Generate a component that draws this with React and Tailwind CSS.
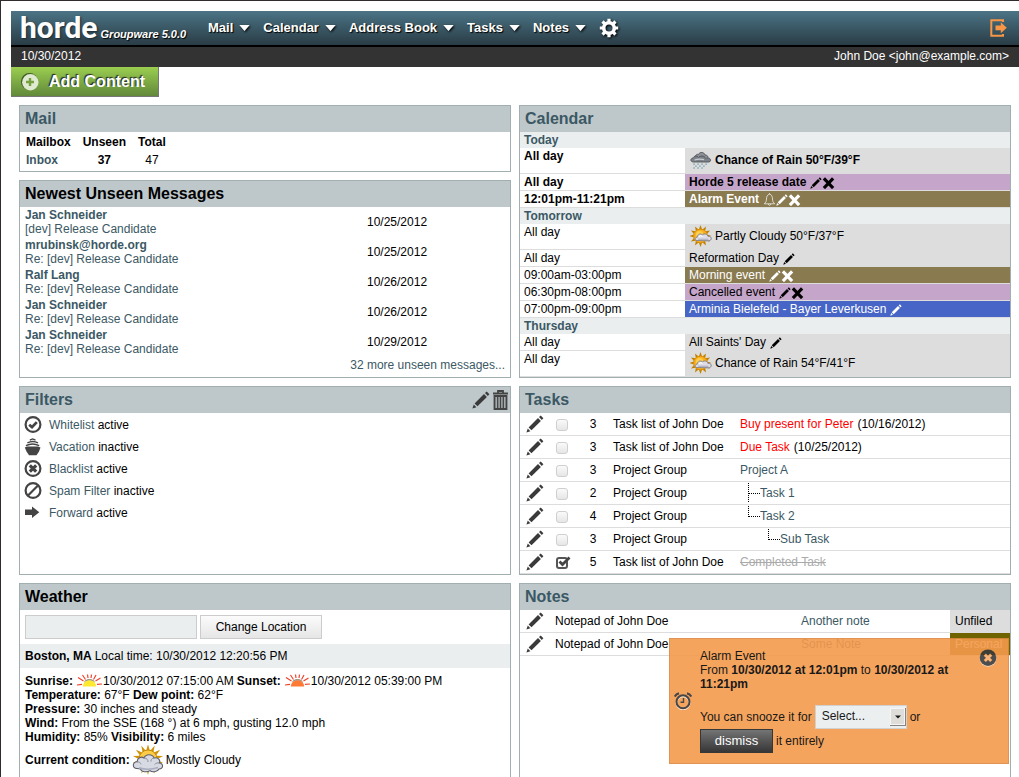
import React from "react";

const LINK = "text-[#3b5864] hover:underline";

function Pencil({ className = "size-[18px] text-[#3a3a3a]" }) {
  return (
    <svg viewBox="0 0 18 18" className={"shrink-0 " + className} fill="currentColor" aria-hidden="true">
      <path d="M0.4 17.6 1.8 13.6 4.4 16.2Z" />
      <path d="M2.6 12.4 12 3 14.9 5.9 5.5 15.3Z" />
      <path d="M13 2.1 14.7 0.5 17.4 3.2 15.8 4.9Z" />
    </svg>
  );
}

function Cross() {
  return (
    <svg viewBox="0 0 13 13" className="h-3 w-[13px] shrink-0" stroke="currentColor" strokeWidth="3.4" fill="none" aria-hidden="true">
      <path d="M1.5 1.5 11.5 12M11.5 1.5 1.5 12" />
    </svg>
  );
}

function Bell() {
  return (
    <svg viewBox="0 0 13 13" className="h-[13px] w-[13px] shrink-0" stroke="currentColor" strokeWidth="0.7" fill="none" aria-hidden="true">
      <path d="M6.5 1.2C4.2 1.6 3.6 3.6 3.5 6 3.4 8.5 2.8 9.4 1.3 10.8H11.7C10.2 9.4 9.6 8.5 9.5 6 9.4 3.6 8.8 1.6 6.5 1.2ZM5 11.2 6.5 12.4 8 11.2M6.5 0.2V1.2" />
    </svg>
  );
}

function Rays({ color, cx, cy, inner, outer, count, width }) {
  const rays = [];
  for (let i = 0; i < count; i++) {
    const a = (i * 2 * Math.PI) / count - Math.PI / 2;
    rays.push(
      "M" + (cx + inner * Math.cos(a - width)) + " " + (cy + inner * Math.sin(a - width)) +
      "L" + (cx + outer * Math.cos(a)) + " " + (cy + outer * Math.sin(a)) +
      "L" + (cx + inner * Math.cos(a + width)) + " " + (cy + inner * Math.sin(a + width)) + "Z"
    );
  }
  return <path d={rays.join("")} fill={color} />;
}

function PartlyCloudy() {
  return (
    <svg viewBox="0 0 22 22" className="size-[22px] shrink-0" aria-hidden="true">
      <Rays color="#c08200" cx={10.5} cy={11} inner={6.8} outer={11} count={12} width={0.24} />
      <circle cx="10.5" cy="11" r="6.8" fill="#f9b320" stroke="#e08c06" strokeWidth="1" />
      <circle cx="9.5" cy="9.5" r="3.5" fill="#ffd050" />
      <path d="M7 15.6C4.4 15.4 4.6 12.2 7.2 12.2 7.5 9.2 10.6 8.2 12.4 9.8 14.4 8.2 17.4 9 17.8 11.2 22 11 22.4 15.4 18.8 15.8Z" fill="#dcdce6" stroke="#82828f" strokeWidth="1" />
      <path d="M8.2 14.3H18.4" stroke="#b0b0c0" strokeWidth="1.2" />
      <path d="M9 12Q10.500 9.800 12.500 11.500" stroke="#fff" strokeWidth="1.2" fill="none" />
    </svg>
  );
}

function MostlyCloudy() {
  return (
    <svg viewBox="0 0 32 30" className="h-[30px] w-8 shrink-0" aria-hidden="true">
      <Rays color="#cf9408" cx={16} cy={14.5} inner={9} outer={15.5} count={14} width={0.2} />
      <circle cx="16" cy="14" r="9" fill="#fdcb45" stroke="#c98a0c" />
      <path d="M5 23.5C-0.4 23.4 0.6 16.2 5.2 16.8 5 13 9.4 11 12 13 13.6 8.8 20.4 8.6 22 13 26.4 12 28.6 15.4 27.4 18 31.8 18.2 31.6 24 27 24 25.6 27.2 19.6 27.4 18 25.6 15 27.6 9 27 8.6 24Z" fill="#d8dae3" stroke="#5c5f6a" strokeWidth="1.1" />
      <path d="M12 13C15 13 16 15 16 17M22 13C19.6 13.4 18.8 15 19 16.6M5.2 16.8C7.4 16.6 8.6 18 9 19.4M27.4 18C25.6 17.6 23.6 18.2 22.6 19.6" fill="none" stroke="#8a8e9b" />
      <path d="M7 22.8C12 24.5 20 24.6 26 22.6" stroke="#a9adbf" strokeWidth="1.6" fill="none" />
    </svg>
  );
}

function RainCloud() {
  return (
    <svg viewBox="0 0 22 18" className="h-[18px] w-[22px] shrink-0" aria-hidden="true">
      <path d="M5 6.5C5.400 3 8 3.200 8.600 3.400 9.600 0.600 14.200 0.800 15 4 17.400 4 18 5.400 17.800 6.500" fill="#8d9197" stroke="#595d63" />
      <path d="M3.5 11C0 11 0.2 7.2 3 7.2 3.6 4.6 7.4 4.6 8.6 6.400 10.400 4.400 14.800 4.800 15.600 7.200 20 5.400 22.400 10 19 11Z" fill="#7d828a" stroke="#4c5056" strokeWidth="0.9" />
      <path d="M4.500 9C8 7.800 11 8 14 8.600" stroke="#c9ccd1" strokeWidth="1.300" fill="none" />
      <path d="M4.300 12.600 3.800 13.800M8.300 12.600 7.800 13.800M12.300 12.600 11.800 13.800M16.300 12.600 15.800 13.800M6.200 14.600 5.700 15.800M10.200 14.600 9.700 15.800M14.200 14.600 13.700 15.800M4.200 16.400 3.800 17.600M8.200 16.400 7.800 17.600M12.200 16.400 11.800 17.600" stroke="#5f94a8" strokeWidth="1.200" />
    </svg>
  );
}

function HorizonSun({ fill }) {
  return (
    <svg viewBox="0 0 27 13" className="h-[13px] w-[27px] shrink-0" aria-hidden="true">
      <path d="M2 3.500 7.500 7M1 11 6 10.300M6.500 1 9.500 5.500M11.500 0.500 12 4M15.500 0.500 15 4M20 1 17.500 5.500M24.500 4 19.500 7M26 10 21 10.300" stroke="#f0402c" strokeWidth="1.200" />
      <path d="M6.800 12.500C7.200 4 19.800 4 20.200 12.500Z" fill={fill} />
      <path d="M8.500 7.700C11 5 16 5 18.500 7.700" stroke="#6e5a34" strokeWidth="0.900" fill="none" />
    </svg>
  );
}

function Panel({ title, link = true, actions, children, className = "" }) {
  return (
    <section className={"border border-[#a2afb0] bg-white " + className}>
      <header className="flex h-[26px] items-center justify-between bg-[#bec8cb] pr-[2px] pl-[5px]">
        <h2 className={"text-[16px] leading-[20px] font-bold " + (link ? "text-[#3b5864]" : "text-black")}>
          {link ? <a href="#">{title}</a> : title}
        </h2>
        {actions}
      </header>
      {children}
    </section>
  );
}

function TopBar() {
  const items = ["Mail", "Calendar", "Address Book", "Tasks", "Notes"];
  return (
    <header>
      <div className="flex h-9 items-center justify-between border-b-2 border-black bg-linear-to-b from-[#4b7486] to-[#2a3d46] pr-3 pl-[9px]">
        <div className="flex items-center">
          <a href="#" className="flex w-[178px] items-baseline gap-[3px] text-white">
            <span className="font-['Roboto','Liberation_Sans',sans-serif] text-[30px] leading-[34px] font-bold [text-shadow:1px_1px_2px_#1c2b32]">horde</span>
            <span className="text-[11px] font-bold whitespace-nowrap italic [text-shadow:1px_1px_1px_#000]">Groupware 5.0.0</span>
          </a>
          <nav className="ml-[10px] flex items-center gap-[13px]">
            {items.map((label) => (
              <button key={label} type="button" className="flex items-center gap-[6px] text-[13px] leading-4 font-bold text-white [text-shadow:1px_1px_1px_#000]">
                {label}
                <svg viewBox="0 0 11 8" className="h-2 w-[11px] drop-shadow-[1px_1px_1px_#000]" aria-hidden="true">
                  <path d="M0.300 1H10.700L6 6.600Q5.500 7.200 5 6.600Z" fill="#fff" />
                </svg>
              </button>
            ))}
            <button type="button" aria-label="Settings" className="text-white">
              <svg viewBox="0 0 20 20" className="size-5 drop-shadow-[1px_1px_1px_#000]" aria-hidden="true">
                <circle cx="10" cy="10" r="5.300" fill="none" stroke="currentColor" strokeWidth="3.600" />
                <path d="M10 0.800V4M10 16V19.200M0.800 10H4M16 10H19.200M3.500 3.500 5.600 5.600M14.400 14.400 16.500 16.500M3.500 16.500 5.600 14.400M14.400 5.600 16.500 3.500" stroke="currentColor" strokeWidth="3.200" />
              </svg>
            </button>
          </nav>
        </div>
        <a href="#" aria-label="Log out">
          <svg viewBox="0 0 17 18" className="h-[18px] w-[17px]" aria-hidden="true">
            <path d="M13 3V1.200H1.300V16.800H13V15" fill="none" stroke="#f79646" strokeWidth="2" />
            <path d="M5.500 6.500H10.800V3.200L16.800 8.800 10.800 14.200V11.200H5.500Z" fill="#f79646" />
          </svg>
        </a>
      </div>
      <div className="flex h-5 items-center justify-between bg-[#333] pr-[10px] pb-[2px] pl-[10px] text-white">
        <span>10/30/2012</span>
        <span>John Doe &lt;john@example.com&gt;</span>
      </div>
    </header>
  );
}

function MailPanel() {
  return (
    <Panel title="Mail">
      <table className="mt-px mb-[2px]">
        <thead>
          <tr className="h-[18px]">
            <th className="px-[6px] text-left">Mailbox</th>
            <th className="px-[6px]">Unseen</th>
            <th className="px-[6px]">Total</th>
          </tr>
        </thead>
        <tbody>
          <tr className="h-[18px] text-center">
            <td className="px-[6px] text-left font-bold"><a href="#" className={LINK}>Inbox</a></td>
            <td className="px-[6px] font-bold">37</td>
            <td className="px-[6px]">47</td>
          </tr>
        </tbody>
      </table>
    </Panel>
  );
}

const MESSAGES = [
  ["Jan Schneider", "[dev] Release Candidate", "10/25/2012"],
  ["mrubinsk@horde.org", "Re: [dev] Release Candidate", "10/25/2012"],
  ["Ralf Lang", "Re: [dev] Release Candidate", "10/26/2012"],
  ["Jan Schneider", "Re: [dev] Release Candidate", "10/26/2012"],
  ["Jan Schneider", "Re: [dev] Release Candidate", "10/29/2012"],
];

function NewestPanel() {
  return (
    <Panel title="Newest Unseen Messages" link={false} className="flex-1">
      <table className="w-full">
        <tbody>
          {MESSAGES.map(([from, subject, date], i) => (
            <tr key={i} className="h-[30px]">
              <td className="w-[70%] pl-[5px]">
                <a href="#" className={"block w-fit font-bold " + LINK}>{from}</a>
                <a href="#" className={"block w-fit " + LINK}>{subject}</a>
              </td>
              <td className="pl-1">{date}</td>
            </tr>
          ))}
        </tbody>
      </table>
      <p className="h-5 pt-px pr-[5px] text-right"><a href="#" className={LINK}>32 more unseen messages...</a></p>
    </Panel>
  );
}

const GREY = "bg-[#dddddd] text-black";
const PURPLE = "bg-[#c5a5c9] text-black";
const BROWN = "bg-[#8a7a50] text-white";
const BLUE = "bg-[#4665c6] text-white";

const DAYS = [
  {
    day: "Today",
    bold: true,
    events: [
      { time: "All day", label: "Chance of Rain 50°F/39°F", weather: "rain", color: GREY },
      { time: "All day", label: "Horde 5 release date", color: PURPLE, edit: true, remove: true },
      { time: "12:01pm-11:21pm", label: "Alarm Event", color: BROWN, alarm: true, edit: true, remove: true },
    ],
  },
  {
    day: "Tomorrow",
    events: [
      { time: "All day", label: "Partly Cloudy 50°F/37°F", weather: "sun", color: GREY },
      { time: "All day", label: "Reformation Day", color: GREY, edit: true },
      { time: "09:00am-03:00pm", label: "Morning event", color: BROWN, edit: true, remove: true },
      { time: "06:30pm-08:00pm", label: "Cancelled event", color: PURPLE, edit: true, remove: true },
      { time: "07:00pm-09:00pm", label: "Arminia Bielefeld - Bayer Leverkusen", color: BLUE, edit: true },
    ],
  },
  {
    day: "Thursday",
    events: [
      { time: "All day", label: "All Saints' Day", color: GREY, edit: true },
      { time: "All day", label: "Chance of Rain 54°F/41°F", weather: "sun", color: GREY },
    ],
  },
];

function EventRow({ event, bold }) {
  return (
    <tr className={bold ? "font-bold" : ""}>
      <td className="border-b border-[#dddddd] px-1 pt-px align-top">{event.time}</td>
      <td className={"border-b border-[#dddddd] px-1 py-0 " + event.color}>
        {event.weather ? (
          <div className="flex h-[25px] items-center gap-[3px] pb-px pl-px">
            {event.weather === "rain" ? <RainCloud /> : <PartlyCloudy />}
            <span>{event.label}</span>
          </div>
        ) : (
          <div className="flex h-4 items-center">
            <a href="#" className="mr-1">{event.label}</a>
            {event.alarm && <Bell />}
            {event.edit && <button type="button" aria-label="Edit" className="pt-px"><Pencil className="size-3" /></button>}
            {event.remove && <button type="button" aria-label="Delete" className="pt-px"><Cross /></button>}
          </div>
        )}
      </td>
    </tr>
  );
}

function CalendarPanel() {
  return (
    <Panel title="Calendar">
      <table className="w-full table-fixed border-separate border-spacing-0">
        <colgroup>
          <col className="w-[165px]" />
          <col />
        </colgroup>
        {DAYS.map((group) => (
          <tbody key={group.day}>
            <tr>
              <th colSpan={2} className="h-4 bg-[#eaeeef] px-1 py-0 text-left">
                <a href="#" className={LINK}>{group.day}</a>
              </th>
            </tr>
            {group.events.map((event, i) => <EventRow key={i} event={event} bold={group.bold} />)}
          </tbody>
        ))}
      </table>
    </Panel>
  );
}

function FilterIcon({ kind }) {
  return (
    <svg viewBox="0 0 18 18" className="size-[18px] shrink-0 text-[#444]" fill="none" stroke="currentColor" aria-hidden="true">
      {(kind === "check" || kind === "cross" || kind === "ban") && <circle cx="9" cy="8.500" r="7.400" strokeWidth="2.200" />}
      {kind === "check" && <path d="M5.200 8.700 8 11.100 12.800 6.100" strokeWidth="2.800" />}
      {kind === "cross" && <path d="M5.800 5.300 12.200 11.700M12.200 5.300 5.800 11.700" strokeWidth="3.200" />}
      {kind === "ban" && <path d="M3.800 13.700 14.200 3.300" strokeWidth="2.200" />}
      {kind === "ship" && (
        <g>
          <path d="M0.800 9.400 3 8.600H14L16.500 9.400 15 13.500 12.500 17.300H5L2.500 13.500Z" fill="currentColor" stroke="none" />
          <path d="M2 7.600C6 5.600 11 5.600 15.200 7.600M3.400 4.900C7 3 10.500 3 14 4.900M5.800 2.200 8.600 .9 11.500 2.200" strokeWidth="1.400" />
        </g>
      )}
      {kind === "arrow" && <path d="M1 5.600H8V2.400L15.300 8.200 8 14V11H1Z" fill="currentColor" stroke="none" />}
    </svg>
  );
}

const FILTERS = [
  ["check", "Whitelist", "active"],
  ["ship", "Vacation", "inactive"],
  ["cross", "Blacklist", "active"],
  ["ban", "Spam Filter", "inactive"],
  ["arrow", "Forward", "active"],
];

function FiltersPanel() {
  const actions = (
    <div className="flex items-center gap-[3px]">
      <button type="button" aria-label="Edit filters"><Pencil /></button>
      <button type="button" aria-label="Delete filters">
        <svg viewBox="0 0 15 20" className="h-5 w-[15px] text-[#444]" fill="none" stroke="currentColor" aria-hidden="true">
          <path d="M0 3.500H15M5 3V1H10V3" strokeWidth="1.800" />
          <path d="M1.500 6V19H13.500V6Z" strokeWidth="1.800" fill="#a5acae" />
          <path d="M4.700 6V18.500M7.500 6V18.500M10.300 6V18.500" strokeWidth="1.300" />
        </svg>
      </button>
    </div>
  );
  return (
    <Panel title="Filters" actions={actions}>
      <ul className="pt-px">
        {FILTERS.map(([kind, name, state]) => (
          <li key={name} className="flex h-[22px] items-center gap-[7px] pl-1">
            <FilterIcon kind={kind} />
            <span><a href="#" className={LINK}>{name}</a> {state}</span>
          </li>
        ))}
      </ul>
    </Panel>
  );
}

const TASKS = [
  { priority: 3, list: "Task list of John Doe", name: "Buy present for Peter", due: "(10/16/2012)" },
  { priority: 3, list: "Task list of John Doe", name: "Due Task", due: "(10/25/2012)" },
  { priority: 3, list: "Project Group", name: "Project A" },
  { priority: 2, list: "Project Group", name: "Task 1", depth: 1, more: true },
  { priority: 4, list: "Project Group", name: "Task 2", depth: 1 },
  { priority: 3, list: "Project Group", name: "Sub Task", depth: 2 },
  { priority: 5, list: "Task list of John Doe", name: "Completed Task", done: true },
];

function Branch({ more }) {
  return (
    <svg viewBox="0 0 20 20" className="h-5 w-5 shrink-0" stroke="#000" strokeDasharray="1 1" fill="none" aria-hidden="true">
      <path d={more ? "M8.500 0V20M9 10.500H20" : "M8.500 0V11M9 10.500H20"} />
    </svg>
  );
}

function TaskRow({ task, index }) {
  let tone = LINK;
  if (task.due) tone = "text-[#ff0000] hover:underline";
  if (task.done) tone = "text-[#aaaaaa] line-through";
  return (
    <tr className="h-[23px]">
      <td className="w-[31px] border-b border-[#dddddd] pl-[6px]">
        <button type="button" aria-label={"Edit " + task.name} className="block"><Pencil /></button>
      </td>
      <td className="w-[35px] border-b border-[#dddddd] pl-[5px]">
        <label className="relative block h-4 w-4 pt-[3px]">
          <input
            type="checkbox"
            id={"task-" + index}
            aria-label={"Complete " + task.name}
            defaultChecked={!!task.done}
            className="peer block size-3 appearance-none rounded-[3px] border border-[#cfcfcf] bg-linear-to-b from-[#fafafa] to-[#e6e6e6] checked:border-2 checked:border-[#555] checked:from-white checked:to-white"
          />
          <svg viewBox="0 0 16 16" className="pointer-events-none absolute inset-0 hidden size-4 peer-checked:block" aria-hidden="true">
            <path d="M3.500 7.500 6.500 10.500 13.500 3.500" fill="none" stroke="#444" strokeWidth="2.800" />
          </svg>
        </label>
      </td>
      <td className="w-[14px] border-b border-[#dddddd] text-center">{task.priority}</td>
      <td className="w-[140px] border-b border-[#dddddd] pl-[13px] whitespace-nowrap">{task.list}</td>
      <td className="border-b border-[#dddddd]">
        <div className="flex h-5 items-center gap-1">
          <div className="flex items-center">
            {task.depth === 2 && <span className="w-5" />}
            {task.depth && <Branch more={task.more} />}
            <a href="#" className={tone}>{task.name}</a>
          </div>
          {task.due && <span>{task.due}</span>}
        </div>
      </td>
    </tr>
  );
}

function TasksPanel() {
  return (
    <Panel title="Tasks">
      <table className="w-full border-separate border-spacing-0">
        <tbody>
          {TASKS.map((task, i) => <TaskRow key={i} task={task} index={i} />)}
        </tbody>
      </table>
    </Panel>
  );
}

function WeatherPanel() {
  return (
    <Panel title="Weather" link={false} className="border-b-0">
      <form className="flex gap-[3px] p-[5px]" onSubmit={(e) => e.preventDefault()}>
        <input type="text" aria-label="Location" className="h-6 w-[172px] border border-[#cccccc] bg-[#eaeeef] px-1" />
        <button type="submit" className="h-6 w-[122px] border border-[#cccccc] bg-linear-to-b from-[#fbfbfb] to-[#e6e6e6]">Change Location</button>
      </form>
      <p className="flex h-6 items-center gap-[3px] bg-[#eaeeef] pl-[5px]"><b>Boston, MA</b> Local time: 10/30/2012 12:20:56 PM</p>
      <div className="pt-[5px] pl-[5px]">
        <div className="flex h-[15px] items-center gap-[3px]">
          <b>Sunrise:</b>
          <span className="flex items-center"><HorizonSun fill="#ffe92e" />10/30/2012 07:15:00 AM</span>
          <b>Sunset:</b>
          <span className="flex items-center"><HorizonSun fill="#ff7a35" />10/30/2012 05:39:00 PM</span>
        </div>
        <p><b>Temperature:</b> 67°F <b>Dew point:</b> 62°F</p>
        <p><b>Pressure:</b> 30 inches and steady</p>
        <p><b>Wind:</b> From the SSE (168 °) at 6 mph, gusting 12.0 mph</p>
        <p><b>Humidity:</b> 85% <b>Visibility:</b> 6 miles</p>
        <div className="flex items-center gap-[2px] pt-px"><b>Current condition:</b> <MostlyCloudy /> Mostly Cloudy</div>
      </div>
    </Panel>
  );
}

function NotesPanel() {
  const notes = [
    ["Another note", "Unfiled", "bg-[#dddddd] text-black"],
    ["Some Note", "Personal", "bg-[#6f6300] text-white"],
  ];
  return (
    <Panel title="Notes" className="border-b-0">
      <table className="w-full border-separate border-spacing-0">
        <tbody>
          {notes.map(([title, tag, tone]) => (
            <tr key={title} className="h-[23px]">
              <td className="w-[35px] border-b border-[#dddddd] pl-[6px]">
                <button type="button" aria-label={"Edit " + title} className="block"><Pencil /></button>
              </td>
              <td className="w-[246px] border-b border-[#dddddd]">Notepad of John Doe</td>
              <td className="border-b border-[#dddddd]"><a href="#" className={LINK}>{title}</a></td>
              <td className={"w-[60px] border-b border-[#dddddd] pl-[5px] " + tone}>{tag}</td>
            </tr>
          ))}
        </tbody>
      </table>
    </Panel>
  );
}

function AlarmPopup() {
  return (
    <aside role="alertdialog" aria-label="Alarm Event" className="fixed right-[10px] bottom-[13px] flex w-[340px] gap-2 border border-[#dd8840] bg-[#f49b4d] py-[10px] pr-[11px] pl-1 opacity-90">
      <svg viewBox="0 0 18 18" className="size-[18px] shrink-0 self-center" fill="none" stroke="#333" aria-hidden="true">
        <circle cx="9" cy="10.800" r="6.500" stroke="#fbe0c6" strokeWidth="2" />
        <circle cx="9" cy="9.800" r="6.500" strokeWidth="2" />
        <path d="M9.500 6V10.200H6.500" strokeWidth="1.400" />
        <path d="M0.800 4.600Q2 1.800 5 1.300M17.200 4.600Q16 1.800 13 1.300" strokeWidth="2.200" />
      </svg>
      <div className="flex-1">
        <p>Alarm Event</p>
        <p>From <b>10/30/2012 at 12:01pm</b> to <b>10/30/2012 at 11:21pm</b></p>
        <div className="mt-[14px] flex h-6 items-center gap-[3px]">
          <label htmlFor="snooze">You can snooze it for</label>
          <div className="relative">
            <select id="snooze" className="block h-6 w-[92px] appearance-none border border-[#cccccc] bg-[#eaeeef] pb-[2px] pl-[6px]">
              <option>Select...</option>
              <option>5 minutes</option>
              <option>15 minutes</option>
              <option>1 hour</option>
            </select>
            <svg viewBox="0 0 16 18" className="pointer-events-none absolute top-[3px] right-px h-[18px] w-4" aria-hidden="true">
              <path d="M0 0H16V18H0Z" fill="#777" />
              <path d="M0 0H15V17H0Z" fill="#f4f4f4" />
              <path d="M1 1H14V16H1Z" fill="#dcdad5" />
              <path d="M5 7.500H11L8 10.500Z" fill="#000" />
            </svg>
          </div>
          <span>or</span>
        </div>
        <div className="flex h-6 items-center gap-[3px]">
          <button type="button" className="h-6 w-[73px] border border-[#222] bg-linear-to-b from-[#666] to-[#222] text-[13px] leading-[14px] text-white">dismiss</button>
          <span>it entirely</span>
        </div>
      </div>
      <button type="button" aria-label="Close" className="self-start">
        <svg viewBox="0 0 18 18" className="size-[18px]" aria-hidden="true">
          <circle cx="9" cy="9.500" r="8.300" fill="#f7dcc0" />
          <circle cx="9" cy="8.700" r="8.300" fill="#3a3a3a" />
          <path d="M5.800 5.600 12.200 12M12.200 5.600 5.800 12" stroke="#f9ab66" strokeWidth="3" />
        </svg>
      </button>
    </aside>
  );
}

export default function App() {
  return (
    <div className="flex min-h-screen flex-col border-t border-l border-[#302c2e] bg-white pt-[10px] pl-[10px] font-['Liberation_Sans',Arial,sans-serif] text-[12px] leading-[14px] text-black">
      <TopBar />
      <button type="button" className="flex h-[30px] w-[148px] items-center gap-[10px] border-r border-b border-[#777] bg-linear-to-b from-[#9bce50] to-[#62893a] pl-[10px] text-[16px] leading-5 font-bold text-white [text-shadow:-1px_-1px_1px_#222]">
        <svg viewBox="0 0 18 18" className="size-[18px]" aria-hidden="true">
          <circle cx="8.500" cy="8.500" r="8.500" fill="#3f5c24" />
          <circle cx="9.300" cy="9.300" r="8.200" fill="#e0ead0" />
          <path d="M9 5V13M5 9H13" stroke="#76a040" strokeWidth="2.400" />
        </svg>
        Add Content
      </button>
      <main className="grid flex-1 grid-cols-2 grid-rows-[auto_auto_1fr] gap-2 px-2 pt-2">
        <div className="flex flex-col gap-2">
          <MailPanel />
          <NewestPanel />
        </div>
        <CalendarPanel />
        <FiltersPanel />
        <TasksPanel />
        <WeatherPanel />
        <NotesPanel />
      </main>
      <AlarmPopup />
    </div>
  );
}
